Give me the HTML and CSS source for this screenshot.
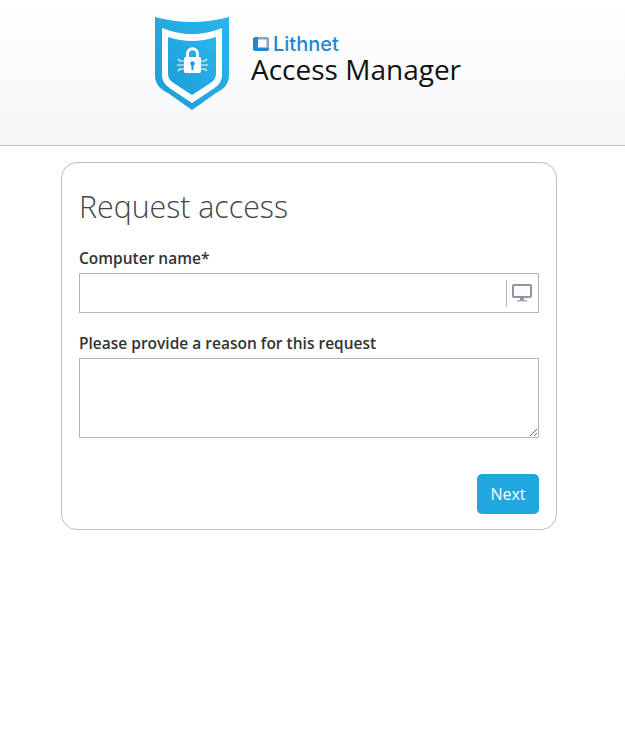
FILE: index.html
```html
<!DOCTYPE html>
<html lang="en">
<head>
    <meta charset="UTF-8">
    <meta name="viewport" content="width=device-width, initial-scale=1.0">
    <title>Request access</title>
    <link rel="stylesheet" href="styles.css">
</head>
<body>

    <header class="page-header">
        <div class="logo">
            <svg class="shield" width="76" height="94" viewBox="0 0 76 94">
                <defs>
                    <linearGradient id="shieldFill" x1="1" y1="0" x2="0" y2="1">
                        <stop offset="0" stop-color="#29b6ec"/>
                        <stop offset="1" stop-color="#1f9bd9"/>
                    </linearGradient>
                </defs>
                <path d="M1 0 Q38 10 75 0 V58 C75 67 70 72 62 76 L38 93 L14 76 C6 72 1 67 1 58 Z" fill="url(#shieldFill)"/>
                <path d="M8 11 Q38 23 68 11 V58 C68 64 65 68 59 72 L38 86 L17 72 C11 68 8 64 8 58 Z" fill="#fff"/>
                <path d="M14 20 Q38 28 62 20 V56 C62 61 60 64 55 67 L38 78 L21 67 C16 64 14 61 14 56 Z" fill="url(#shieldFill)"/>
                <path d="M33.500 40 V37 C33.500 30 43.500 30 43.500 37 V40" fill="none" stroke="#fff" stroke-width="3"/>
                <rect x="30" y="40" width="17" height="16" rx="1.500" fill="#fff"/>
                <circle cx="38.500" cy="46.500" r="2.300" fill="#1f9bd9"/>
                <rect x="37.500" y="47" width="2" height="6" fill="#1f9bd9"/>
                <g fill="none" stroke="#fff" stroke-width="1.200">
                    <path d="M30 44 H26 L24 42 M30 48 H23 M30 52 H26 L24 54"/>
                    <path d="M47 44 H51 L53 42 M47 48 H54 M47 52 H51 L53 54"/>
                </g>
            </svg>
            <div class="logo-text">
                <div class="brand">
                    <svg width="16" height="14" viewBox="0 0 16 14">
                        <path d="M5 0 H14 C15 0 16 1 16 2 V10.500 H13.500 V2.500 H5 Z" fill="#8aa5bb"/>
                        <path d="M2 0 H5 V10.500 H16 V12 C16 13 15 14 14 14 H2 C1 14 0 13 0 12 V2 C0 1 1 0 2 0 Z" fill="#1f88cf"/>
                    </svg>
                    <span>Lithnet</span>
                </div>
                <div class="product">Access Manager</div>
            </div>
        </div>
    </header>

    <main class="card">
        <h1>Request access</h1>
        <form class="request-form">
            <label for="computer">Computer name*</label>
            <div class="input-box">
                <input type="text" id="computer">
                <span class="input-icon">
                    <svg width="20" height="18" viewBox="0 0 20 18">
                        <rect x="1" y="1" width="18" height="12" rx="1" fill="#fbfbfc" stroke="#8f959b" stroke-width="2"/>
                        <rect x="8" y="14" width="4" height="2" fill="#8f959b"/>
                        <rect x="5" y="16" width="10" height="1.500" fill="#a9aeb3"/>
                    </svg>
                </span>
            </div>

            <label for="reason">Please provide a reason for this request</label>
            <textarea id="reason"></textarea>

            <div class="actions">
                <button type="button" class="next-btn">Next</button>
            </div>
        </form>
    </main>

</body>
</html>
```

FILE: styles.css
```css
body {
    font-family: 'Open Sans', 'Noto Sans', sans-serif;
    margin: 0;
    padding: 0;
    background: #fff;
    color: #333;
}

.page-header {
    height: 145px;
    border-bottom: 1px solid #c4c4c4;
    background: linear-gradient(#ffffff, #f5f6f8);
}

.logo {
    display: flex;
    padding: 17px 0 0 154px;
}

.shield {
    flex: none;
}

.logo-text {
    margin-left: 21px;
    padding-top: 17px;
}

.brand {
    display: flex;
    align-items: center;
    gap: 4px;
    height: 20px;
    margin-left: 2px;
    font-family: 'Inter', sans-serif;
    font-size: 20px;
    line-height: 20px;
    font-weight: 500;
    color: #1f88cf;
}

.product {
    font-size: 28px;
    line-height: 30px;
    color: #111;
}

.card {
    box-sizing: border-box;
    width: 496px;
    height: 368px;
    margin: 16px 0 0 61px;
    padding: 0 17px;
    border: 1px solid #bdbdbd;
    border-radius: 16px;
}

.card h1 {
    margin: 0;
    padding-top: 22px;
    font-size: 30.300px;
    line-height: 44px;
    font-weight: 300;
    color: #444;
}

.request-form {
    display: flex;
    flex-direction: column;
    margin-top: 19px;
}

label {
    font-size: 15.500px;
    font-weight: 600;
    line-height: 21px;
    margin-bottom: 4px;
}

.input-box {
    display: flex;
    align-items: center;
    box-sizing: border-box;
    height: 40px;
    margin-bottom: 20px;
    border: 1px solid #b5b5b5;
}

.input-box input {
    flex: 1;
    min-width: 0;
    height: 100%;
    padding: 0 8px;
    border: none;
    outline: none;
    box-sizing: border-box;
}

.input-icon {
    display: flex;
    align-items: center;
    height: 27px;
    padding: 0 6px 0 5px;
    border-left: 1px solid #b5b5b5;
}

textarea {
    box-sizing: border-box;
    height: 80px;
    padding: 8px;
    border: 1px solid #b5b5b5;
    outline: none;
    font-family: inherit;
}

.actions {
    display: flex;
    justify-content: flex-end;
    margin-top: 36px;
}

.next-btn {
    width: 62px;
    height: 40px;
    padding: 0;
    border: none;
    border-radius: 5px;
    background-color: #1fa8e0;
    color: #fff;
    font-family: inherit;
    font-size: 16px;
}
```
